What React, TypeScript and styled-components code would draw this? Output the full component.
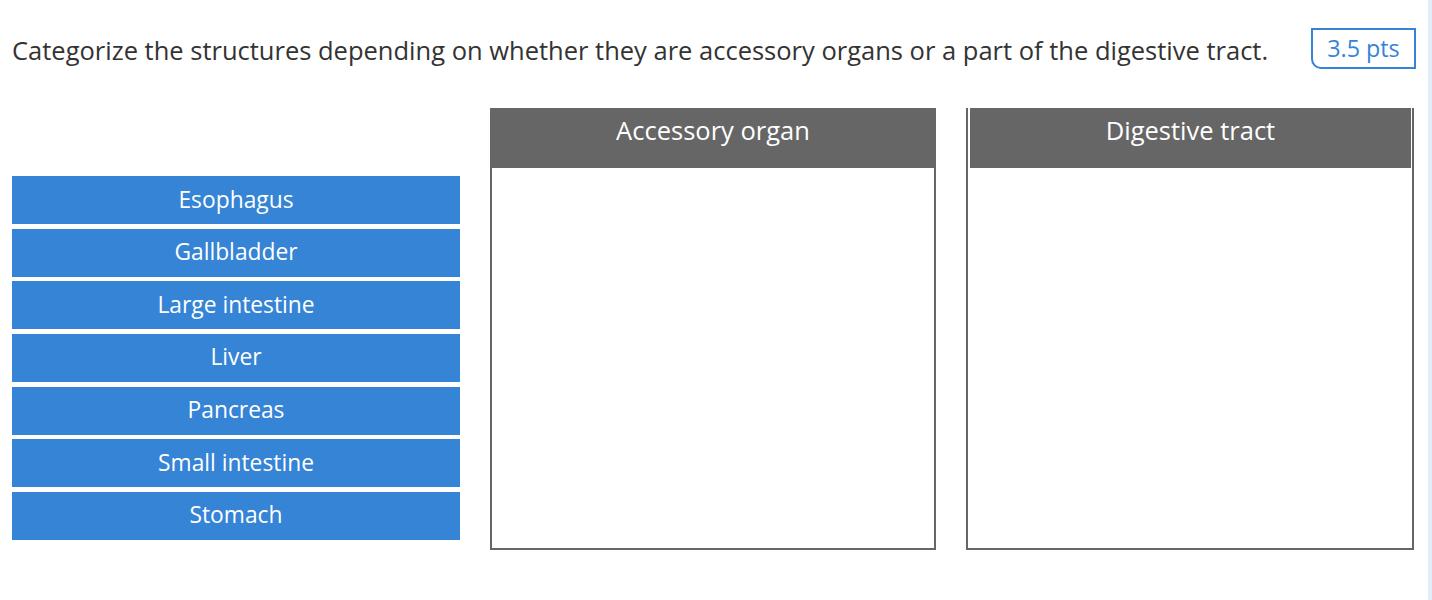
import React from "react";
import styled, { createGlobalStyle } from "styled-components";

const GlobalStyle = createGlobalStyle`
	html, body {
		margin: 0;
		padding: 0;
		background: #ffffff;
		font-family: "Open Sans", "Liberation Sans", sans-serif;
	}
`;

const Page = styled.div`
	display: flex;
	width: 1432px;
	height: 600px;
	overflow: hidden;
`;

const Main = styled.div`
	flex: 1;
	padding: 28px 12px 0 12px;
`;

const EdgeStrip = styled.div`
	width: 4px;
	background-color: #e1edfb;
`;

const QuestionRow = styled.div`
	display: flex;
	align-items: flex-start;
	justify-content: space-between;
`;

const QuestionText = styled.div`
	font-size: 25.5px;
	line-height: 34px;
	margin-top: 5px;
	color: #333333;
	white-space: nowrap;
`;

const Points = styled.div`
	box-sizing: border-box;
	width: 105px;
	height: 41px;
	border: 2px solid #3583d6;
	border-radius: 0 0 0 10px;
	color: #3583d6;
	font-size: 23.3px;
	display: flex;
	align-items: center;
	justify-content: center;
	padding-bottom: 2px;
`;

const Board = styled.div`
	display: flex;
	align-items: flex-start;
	margin-top: 39px;
`;

const Choices = styled.div`
	width: 448px;
	display: flex;
	flex-direction: column;
	gap: 4.67px;
	margin-top: 68px;
	margin-right: 30px;
`;

const Choice = styled.div`
	height: 48px;
	background-color: #3584d5;
	color: #ffffff;
	font-size: 22.8px;
	display: flex;
	align-items: center;
	justify-content: center;
	padding-bottom: 2px;
	box-sizing: border-box;
`;

const Bins = styled.div`
	display: flex;
	gap: 30px;
`;

const Bin = styled.div<{ $w: number }>`
	box-sizing: border-box;
	width: ${(p) => p.$w}px;
	height: 442px;
	border: 2px solid #666666;
	border-top: none;
	display: flex;
	flex-direction: column;
`;

const BinHead = styled.div<{ $inset?: boolean }>`
	height: 60px;
	background-color: #666666;
	color: #ffffff;
	font-size: 25.5px;
	line-height: 34px;
	text-align: center;
	padding-top: 5px;
	box-sizing: border-box;
	margin: ${(p) => (p.$inset ? "0 1px 0 2px" : "0 -2px")};
`;

const items = [
	"Esophagus",
	"Gallbladder",
	"Large intestine",
	"Liver",
	"Pancreas",
	"Small intestine",
	"Stomach",
];

const App = () => {
	return (
		<>
			<GlobalStyle />
			<Page>
				<Main>
					<QuestionRow>
						<QuestionText>
							Categorize the structures depending on whether they are accessory
							organs or a part of the digestive tract.
						</QuestionText>
						<Points>3.5 pts</Points>
					</QuestionRow>
					<Board>
						<Choices>
							{items.map((item) => (
								<Choice key={item}>{item}</Choice>
							))}
						</Choices>
						<Bins>
							<Bin $w={446}>
								<BinHead>Accessory organ</BinHead>
							</Bin>
							<Bin $w={448}>
								<BinHead $inset>Digestive tract</BinHead>
							</Bin>
						</Bins>
					</Board>
				</Main>
				<EdgeStrip />
			</Page>
		</>
	);
};

export default App;
